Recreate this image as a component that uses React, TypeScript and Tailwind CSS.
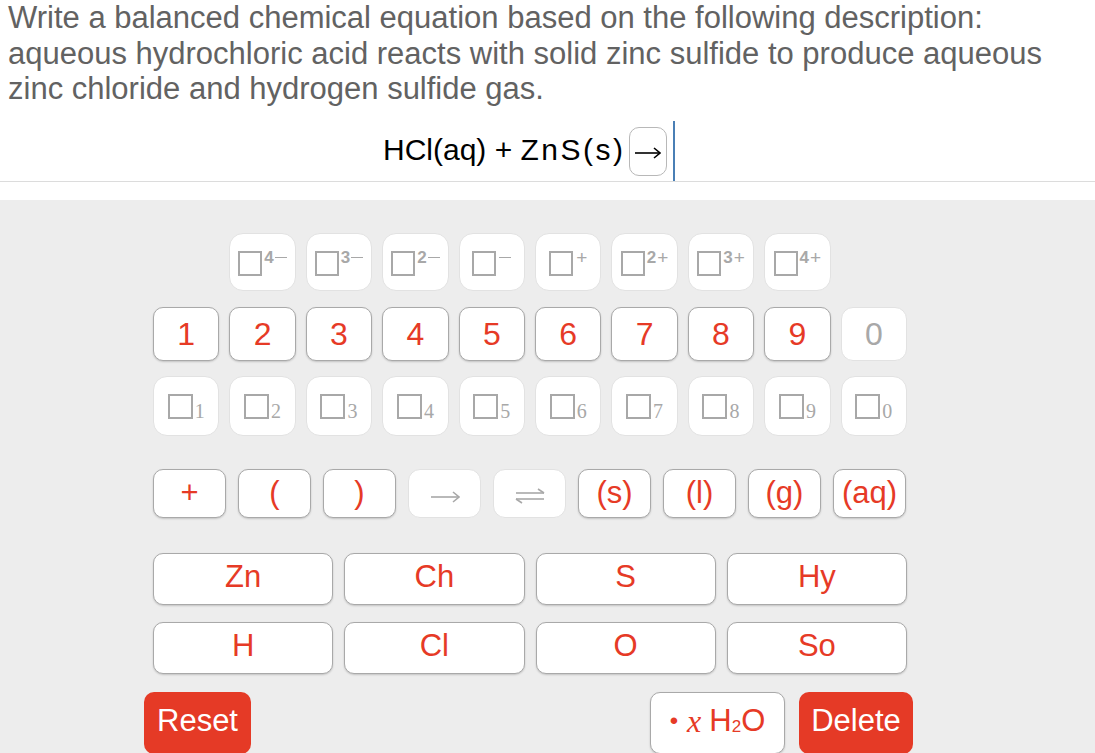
import type { ReactNode } from "react";

const RED = "text-[#e63a26]";

function Key({
  children,
  on = true,
  className = "",
}: {
  children: ReactNode;
  on?: boolean;
  className?: string;
}) {
  return (
    <button
      className={`flex items-center justify-center bg-white ${
        on
          ? "border border-[#a9a9a9] shadow-[0_1px_2px_rgba(0,0,0,0.18)]"
          : "border border-[#e2e2e2]"
      } ${className}`}
    >
      {children}
    </button>
  );
}

function Arrow({ color = "#000", w = 28 }: { color?: string; w?: number }) {
  return (
    <svg width={w} height="14" viewBox={`0 0 ${w} 14`} fill="none" stroke={color} strokeWidth="1.6">
      <line x1="1" y1="7" x2={w - 1} y2="7" />
      <polyline points={`${w - 7},2 ${w - 1},7 ${w - 7},12`} strokeLinejoin="miter" />
    </svg>
  );
}

function Equil() {
  return (
    <svg width="30" height="16" viewBox="0 0 30 16" fill="none" stroke="#a8a8a8" strokeWidth="1.6">
      <line x1="1" y1="5" x2="29" y2="5" />
      <polyline points="23,1 29,5" />
      <line x1="1" y1="11" x2="29" y2="11" />
      <polyline points="7,15 1,11" />
    </svg>
  );
}

function Charge({ n, sign }: { n: string; sign: string }) {
  return (
    <Key on={false} className="h-[58px] rounded-[14px]">
      <span className="flex items-start pt-[3px]">
        <span className="block w-[24px] h-[25px] border-2 border-[#a8a8a8]" />
        <span className="flex items-center h-[15px] -mt-[1px] ml-[2px] text-[#a8a8a8] leading-none">
          {n && <span className="text-[17px] font-bold">{n}</span>}
          {sign === "+" ? (
            <span className="text-[19px] ml-[1px]">+</span>
          ) : (
            <span className="block w-[12px] h-[1.5px] bg-[#a8a8a8] ml-[1px]" />
          )}
        </span>
      </span>
    </Key>
  );
}

function Sub({ n }: { n: string }) {
  return (
    <Key on={false} className="h-[60px] rounded-[14px]">
      <span className="flex items-end">
        <span className="block w-[25px] h-[25px] border-2 border-[#a8a8a8]" />
        <span className="ml-[2px] -mb-[2px] text-[20px] leading-none text-[#a8a8a8] font-['Liberation_Serif',serif]">
          {n}
        </span>
      </span>
    </Key>
  );
}

export default function App() {
  const charges: [string, string][] = [
    ["4", "-"],
    ["3", "-"],
    ["2", "-"],
    ["", "-"],
    ["", "+"],
    ["2", "+"],
    ["3", "+"],
    ["4", "+"],
  ];
  const subs = ["1", "2", "3", "4", "5", "6", "7", "8", "9", "0"];
  const elements = ["Zn", "Ch", "S", "Hy", "H", "Cl", "O", "So"];
  const op = `w-[73px] h-[49px] rounded-[10px] text-[31px] ${RED}`;

  return (
    <div className="w-[1095px] h-[753px] overflow-hidden bg-white font-['Liberation_Sans',Arial,sans-serif]">
      <p className="h-[107px] px-[8px] text-[31px] leading-[35.5px] text-[#626262]">
        Write a balanced chemical equation based on the following description:
        <br />
        aqueous hydrochloric acid reacts with solid zinc sulfide to produce aqueous
        <br />
        zinc chloride and hydrogen sulfide gas.
      </p>

      <div className="h-[75px] flex items-end pl-[383px] border-b border-[#dcdcdc]">
        <span className="text-[30px] leading-[32px] mb-[15px] text-black">
          HCl(aq) + <span className="tracking-[2.5px]">ZnS(s)</span>
        </span>
        <span className="ml-[3px] mb-[5px] w-[38px] h-[49px] rounded-[10px] border border-[#b8b8b8] flex items-center justify-center pt-[2px]">
          <Arrow w={27} />
        </span>
        <span className="ml-[6px] w-[2px] h-[60px] bg-[#4a7fb5]" />
      </div>

      <div className="mt-[18px] h-[560px] bg-[#ededed] pt-[33px]">
        <div className="ml-[153px] w-[754px]">
          <div className="grid grid-cols-10 gap-x-[10px]">
            <div />
            {charges.map(([n, s], i) => (
              <Charge key={i} n={n} sign={s} />
            ))}
          </div>

          <div className="mt-[16px] grid grid-cols-10 gap-x-[10px]">
            {subs.map((d) => (
              <Key
                key={d}
                on={d !== "0"}
                className={`h-[54px] rounded-[10px] text-[32px] ${
                  d === "0" ? "text-[#a8a8a8] rounded-[12px]" : RED
                }`}
              >
                {d}
              </Key>
            ))}
          </div>

          <div className="mt-[15px] grid grid-cols-10 gap-x-[10px]">
            {subs.map((d) => (
              <Sub key={d} n={d} />
            ))}
          </div>

          <div className="mt-[33px] flex gap-x-[12px]">
            <Key className={`${op} text-[28px]`}>+</Key>
            <Key className={op}>(</Key>
            <Key className={op}>)</Key>
            <Key on={false} className="w-[73px] h-[49px] rounded-[12px]">
              <span className="pt-[6px] flex">
                <Arrow color="#a8a8a8" w={30} />
              </span>
            </Key>
            <Key on={false} className="w-[73px] h-[49px] rounded-[12px]">
              <span className="pt-[4px] flex">
                <Equil />
              </span>
            </Key>
            <Key className={op}>(s)</Key>
            <Key className={op}>(l)</Key>
            <Key className={op}>(g)</Key>
            <Key className={op}>(aq)</Key>
          </div>

          <div className="mt-[35px] grid grid-cols-4 gap-x-[11px] gap-y-[17px]">
            {elements.map((e) => (
              <Key key={e} className={`h-[52px] rounded-[10px] text-[31px] pb-[3px] ${RED}`}>
                {e}
              </Key>
            ))}
          </div>
        </div>

        <div className="ml-[144px] w-[769px] mt-[18px] flex">
          <button className="w-[107px] h-[62px] rounded-[10px] bg-[#e53a26] text-white text-[31px] pb-[4px]">
            Reset
          </button>
          <Key className={`ml-auto w-[135px] h-[62px] rounded-[10px] text-[31px] ${RED} pb-[4px]`}>
            <span className="text-[24px] mr-[9px]">•</span>
            <span className="italic font-['Liberation_Serif',serif] text-[32px] mr-[8px]">x</span>
            <span>
              H<span className="text-[17px] relative top-[1px]">2</span>O
            </span>
          </Key>
          <button className="ml-[14px] w-[114px] h-[62px] rounded-[10px] bg-[#e53a26] text-white text-[31px] pb-[4px]">
            Delete
          </button>
        </div>
      </div>
    </div>
  );
}
